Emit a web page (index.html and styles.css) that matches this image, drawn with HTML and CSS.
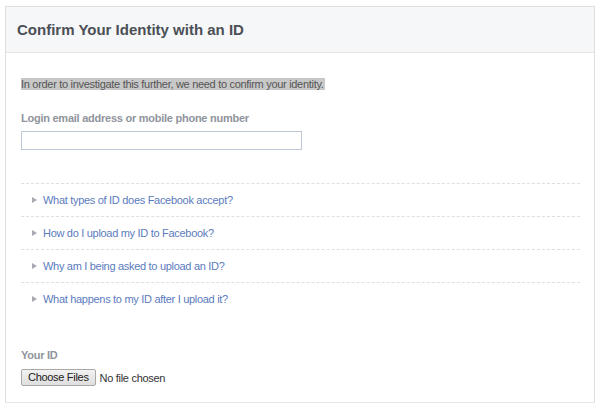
FILE: index.html
```html
<!DOCTYPE html>
<html>
<head>
<meta charset="utf-8">
<link rel="stylesheet" href="styles.css">
</head>
<body>
<div class="panel">
  <div class="header"><h2 class="title">Confirm Your Identity with an ID</h2></div>
  <div class="content">
    <p class="intro"><span class="hl">In order to investigate this further, we need to confirm your identity.</span></p>
    <div class="label">Login email address or mobile phone number</div>
    <input class="field" type="text">
    <ul class="faq">
      <li class="faq-item"><span class="tri"></span><a class="faq-link">What types of ID does Facebook accept?</a></li>
      <li class="faq-item"><span class="tri"></span><a class="faq-link">How do I upload my ID to Facebook?</a></li>
      <li class="faq-item"><span class="tri"></span><a class="faq-link">Why am I being asked to upload an ID?</a></li>
      <li class="faq-item last"><span class="tri"></span><a class="faq-link">What happens to my ID after I upload it?</a></li>
    </ul>
    <div class="label id-label">Your ID</div>
    <div class="file-row"><span class="file-btn">Choose Files</span><span class="file-text">No file chosen</span></div>
  </div>
</div>
</body>
</html>
```
FILE: styles.css
```css
html, body { margin: 0; padding: 0; background: #fff; }
body { font-family: "Liberation Sans", Arial, sans-serif; }
.panel {
  margin: 6px 5px 0 5px;
  border: 1px solid #dddfe2;
  border-bottom-color: #e5e6e9;
  height: 397px;
  box-sizing: border-box;
  background: #fff;
}
.header {
  background: #f6f7f9;
  border-bottom: 1px solid #e5e5e5;
  height: 45px;
  display: flex;
  align-items: center;
  padding-left: 11px;
}
.title {
  margin: 0;
  font-size: 15px;
  font-weight: bold;
  color: #4b4f56;
  padding-bottom: 1px;
}
.content { padding: 25px 14px 0 15px; }
.intro { margin: 0; font-size: 11px; color: #4b4f56; line-height: 12px; letter-spacing: -0.3px; }
.hl { background: #c8c8c8; color: #555; padding: 0 1px 0 0; }
.label { font-size: 11px; font-weight: bold; color: #90949c; margin-top: 22px; line-height: 13px; letter-spacing: -0.25px; }
.field {
  display: block;
  margin-top: 6px;
  width: 281px;
  height: 19px;
  box-sizing: border-box;
  border: 1px solid #bdc7d8;
  padding: 0;
}
.faq { list-style: none; margin: 33px 0 0 0; padding: 0; }
.faq-item {
  border-top: 1px dashed #dddfe2;
  height: 32px;
  display: flex;
  align-items: center;
  padding-left: 11px;
  font-size: 11px;
  letter-spacing: -0.3px;
}
.tri {
  width: 0; height: 0;
  border-left: 5px solid #a7abb1;
  border-top: 3px solid transparent;
  border-bottom: 3px solid transparent;
  margin-right: 6px;
}
.faq-link { color: #5b7bbd; }
.id-label { margin-top: 34px; }
.file-row { display: flex; align-items: center; margin-top: 7px; font-size: 11px; letter-spacing: -0.3px; }
.file-btn {
  background: linear-gradient(#f2f2f2, #dedede);
  border: 1px solid #a9a9a9;
  border-radius: 2px;
  color: #222;
  line-height: 15px;
  padding: 0 6px;
  box-sizing: border-box;
  height: 17px;
  font-size: 11px;
}
.file-text { color: #333; margin-left: 4px; }
```
